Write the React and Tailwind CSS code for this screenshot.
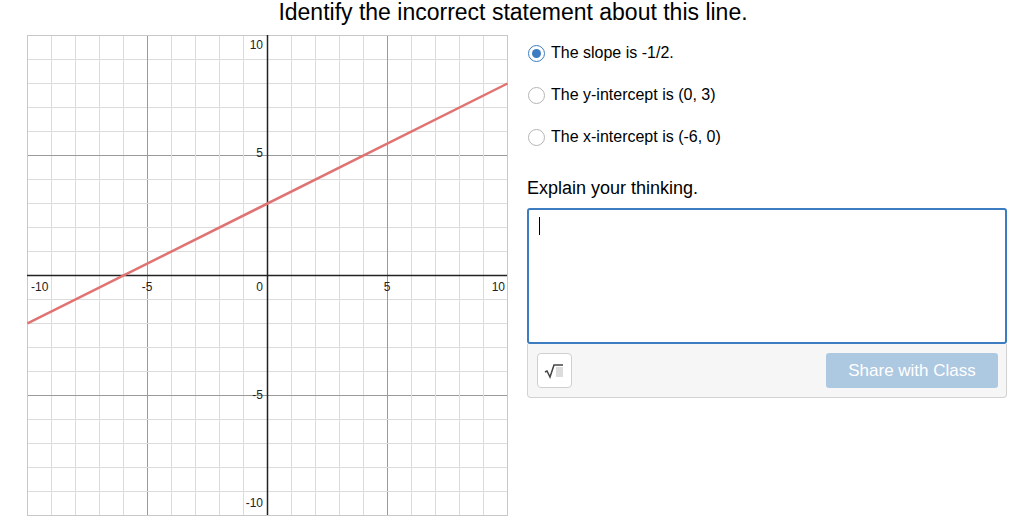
import React from "react";

const font = { fontFamily: '"Liberation Sans", Arial, sans-serif' };

/* ------------------ Graph ------------------ */
const Graph = () => {
    const size = 480;
    const unit = 24;
    const lines = Array.from({ length: 21 }, (_, i) => i);
    const toX = (x) => (x + 10) * unit + 0.5;
    const toY = (y) => (10 - y) * unit + 0.5;

    return (
        <svg width={size + 2} height={size + 2} className="block" style={font}>
            {/* grid */}
            {lines.map((i) => (
                <g key={i}>
                    <line x1={i * unit + 0.5} y1={0} x2={i * unit + 0.5} y2={size} stroke={i % 5 === 0 ? "#9a9a9a" : "#dcdcdc"} strokeWidth="1" />
                    <line x1={0} y1={i * unit + 0.5} x2={size} y2={i * unit + 0.5} stroke={i % 5 === 0 ? "#9a9a9a" : "#dcdcdc"} strokeWidth="1" />
                </g>
            ))}
            {/* border */}
            <rect x="0.5" y="0.5" width={size} height={size} fill="none" stroke="#c8c8c8" />
            {/* axes */}
            <line x1={0} y1={toY(0)} x2={size} y2={toY(0)} stroke="#222" strokeWidth="1.5" />
            <line x1={toX(0)} y1={0} x2={toX(0)} y2={size} stroke="#222" strokeWidth="1.5" />

            {/* line y = x/2 + 3 */}
            <line x1={toX(-10)} y1={toY(-2)} x2={toX(10)} y2={toY(8)} stroke="#e07272" strokeWidth="2.5" />

            {/* labels */}
            <g fontSize="12" fill="#222">
                <text x="4" y="256">-10</text>
                <text x="120" y="256" textAnchor="middle">-5</text>
                <text x="236" y="256" textAnchor="end">0</text>
                <text x="360" y="256" textAnchor="middle">5</text>
                <text x="478" y="256" textAnchor="end">10</text>
                <text x="236" y="14" textAnchor="end">10</text>
                <text x="236" y="122" textAnchor="end">5</text>
                <text x="236" y="364" textAnchor="end">-5</text>
                <text x="236" y="472" textAnchor="end">-10</text>
            </g>
        </svg>
    );
};

const Radio = ({ checked }) => (
    <span
        className={`w-[17px] h-[17px] rounded-full border flex items-center justify-center bg-white ${checked ? "border-[#3d7cc0]" : "border-[#b5b5b5]"
            }`}
    >
        {checked && <span className="w-[9px] h-[9px] rounded-full bg-[#3d7cc0]" />}
    </span>
);

const options = [
    { label: "The slope is -1/2.", checked: true },
    { label: "The y-intercept is (0, 3)", checked: false },
    { label: "The x-intercept is (-6, 0)", checked: false },
];

export default function App() {
    return (
        <div className="w-[1026px] h-[525px] bg-white overflow-hidden text-[#111]" style={font}>
            <h1 className="text-[23px] leading-[24px] text-center text-black">
                Identify the incorrect statement about this line.
            </h1>

            <div className="flex pt-[11px]">
                <div className="ml-[27px]">
                    <Graph />
                </div>

                <div className="ml-[18px] w-[480px]">
                    {/* Options */}
                    <div className="flex flex-col -mt-[3px]">
                        {options.map((o) => (
                            <div key={o.label} className="flex items-center gap-[6px] h-[42px] pl-[1px]">
                                <Radio checked={o.checked} />
                                <span className="text-[16px] text-black">{o.label}</span>
                            </div>
                        ))}
                    </div>

                    <div className="text-[18px] leading-[22px] text-black mt-[19px]">Explain your thinking.</div>

                    {/* Response box */}
                    <div className="mt-[9px]">
                        <div className="h-[136px] border-2 border-[#3d7cc0] rounded-[3px] bg-white pl-[10px] pt-[7px]">
                            <div className="w-px h-[18px] bg-black" />
                        </div>
                        <div className="h-[54px] bg-[#f6f6f6] border border-t-0 border-[#d2d2d2] rounded-b-[4px] flex items-center justify-between pl-[9px] pr-[8px]">
                            <button className="w-[35px] h-[35px] bg-white border border-[#cfcfcf] rounded-[4px] flex items-center justify-center">
                                <svg width="22" height="16" viewBox="0 0 22 16">
                                    <rect x="12" y="4" width="7" height="10" fill="#dcdcdc" />
                                    <path d="M1 9 L3 8 L6 14 L10 2 L19 2" fill="none" stroke="#444" strokeWidth="1.5" />
                                </svg>
                            </button>
                            <button className="w-[172px] h-[35px] bg-[#adc8e1] rounded-[3px] text-white text-[17px]">
                                Share with Class
                            </button>
                        </div>
                    </div>
                </div>
            </div>
        </div>
    );
}
